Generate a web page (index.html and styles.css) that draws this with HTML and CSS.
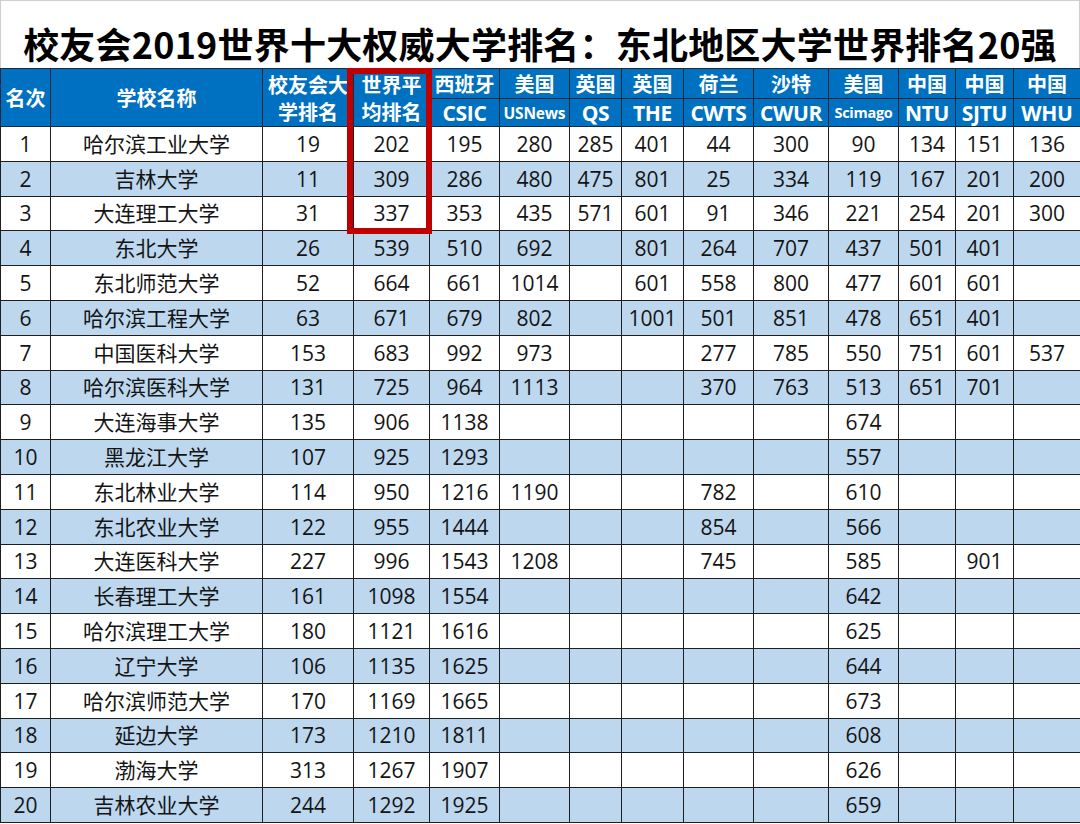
FILE: index.html
```html
<!DOCTYPE html>
<html lang="zh-CN">
<head>
<meta charset="utf-8">
<title>校友会2019世界十大权威大学排名：东北地区大学世界排名20强</title>
<link rel="stylesheet" href="styles.css">
</head>
<body>
<div class="sheet">
  <div class="title">校友会2019世界十大权威大学排名：东北地区大学世界排名20强</div>
  <div class="table-wrap">
    <table class="rank">
      <colgroup>
        <col class="c-no"><col class="c-name"><col class="c-xyh"><col class="c-avg">
        <col class="c-csic"><col class="c-us"><col class="c-qs"><col class="c-the">
        <col class="c-cwts"><col class="c-cwur"><col class="c-sci"><col class="c-ntu">
        <col class="c-sjtu"><col class="c-whu">
      </colgroup>
      <thead>
        <tr class="h1">
          <th rowspan="2">名次</th>
          <th rowspan="2">学校名称</th>
          <th rowspan="2" class="two">校友会大<br>学排名</th>
          <th rowspan="2" class="two">世界平<br>均排名</th>
          <th>西班牙</th><th>美国</th><th>英国</th><th>英国</th><th>荷兰</th>
          <th>沙特</th><th>美国</th><th>中国</th><th>中国</th><th>中国</th>
        </tr>
        <tr class="h2">
          <th>CSIC</th><th class="sm">USNews</th><th>QS</th><th>THE</th><th>CWTS</th>
          <th>CWUR</th><th class="xs">Scimago</th><th>NTU</th><th>SJTU</th><th>WHU</th>
        </tr>
      </thead>
      <tbody>
        <tr><td>1</td><td>哈尔滨工业大学</td><td>19</td><td class="g">202</td><td class="g">195</td><td class="g">280</td><td>285</td><td>401</td><td>44</td><td>300</td><td class="g">90</td><td>134</td><td>151</td><td>136</td></tr>
        <tr><td>2</td><td>吉林大学</td><td>11</td><td class="g">309</td><td class="g">286</td><td class="g">480</td><td>475</td><td>801</td><td>25</td><td>334</td><td class="g">119</td><td>167</td><td>201</td><td>200</td></tr>
        <tr><td>3</td><td>大连理工大学</td><td>31</td><td class="g">337</td><td class="g">353</td><td class="g">435</td><td>571</td><td>601</td><td>91</td><td>346</td><td class="g">221</td><td>254</td><td>201</td><td>300</td></tr>
        <tr><td>4</td><td>东北大学</td><td>26</td><td class="g">539</td><td class="g">510</td><td class="g">692</td><td></td><td>801</td><td>264</td><td>707</td><td class="g">437</td><td>501</td><td>401</td><td></td></tr>
        <tr><td>5</td><td>东北师范大学</td><td>52</td><td class="g">664</td><td class="g">661</td><td class="g">1014</td><td></td><td>601</td><td>558</td><td>800</td><td class="g">477</td><td>601</td><td>601</td><td></td></tr>
        <tr><td>6</td><td>哈尔滨工程大学</td><td>63</td><td class="g">671</td><td class="g">679</td><td class="g">802</td><td></td><td>1001</td><td>501</td><td>851</td><td class="g">478</td><td>651</td><td>401</td><td></td></tr>
        <tr><td>7</td><td>中国医科大学</td><td>153</td><td class="g">683</td><td class="g">992</td><td class="g">973</td><td></td><td></td><td>277</td><td>785</td><td class="g">550</td><td>751</td><td>601</td><td>537</td></tr>
        <tr><td>8</td><td>哈尔滨医科大学</td><td>131</td><td class="g">725</td><td class="g">964</td><td class="g">1113</td><td></td><td></td><td>370</td><td>763</td><td class="g">513</td><td>651</td><td>701</td><td></td></tr>
        <tr><td>9</td><td>大连海事大学</td><td>135</td><td class="g">906</td><td class="g">1138</td><td class="g"></td><td></td><td></td><td></td><td></td><td class="g">674</td><td></td><td></td><td></td></tr>
        <tr><td>10</td><td>黑龙江大学</td><td>107</td><td class="g">925</td><td class="g">1293</td><td class="g"></td><td></td><td></td><td></td><td></td><td class="g">557</td><td></td><td></td><td></td></tr>
        <tr><td>11</td><td>东北林业大学</td><td>114</td><td class="g">950</td><td class="g">1216</td><td class="g">1190</td><td></td><td></td><td>782</td><td></td><td class="g">610</td><td></td><td></td><td></td></tr>
        <tr><td>12</td><td>东北农业大学</td><td>122</td><td class="g">955</td><td class="g">1444</td><td class="g"></td><td></td><td></td><td>854</td><td></td><td class="g">566</td><td></td><td></td><td></td></tr>
        <tr><td>13</td><td>大连医科大学</td><td>227</td><td class="g">996</td><td class="g">1543</td><td class="g">1208</td><td></td><td></td><td>745</td><td></td><td class="g">585</td><td></td><td>901</td><td></td></tr>
        <tr><td>14</td><td>长春理工大学</td><td>161</td><td class="g">1098</td><td class="g">1554</td><td class="g"></td><td></td><td></td><td></td><td></td><td class="g">642</td><td></td><td></td><td></td></tr>
        <tr><td>15</td><td>哈尔滨理工大学</td><td>180</td><td class="g">1121</td><td class="g">1616</td><td class="g"></td><td></td><td></td><td></td><td></td><td class="g">625</td><td></td><td></td><td></td></tr>
        <tr><td>16</td><td>辽宁大学</td><td>106</td><td class="g">1135</td><td class="g">1625</td><td class="g"></td><td></td><td></td><td></td><td></td><td class="g">644</td><td></td><td></td><td></td></tr>
        <tr><td>17</td><td>哈尔滨师范大学</td><td>170</td><td class="g">1169</td><td class="g">1665</td><td class="g"></td><td></td><td></td><td></td><td></td><td class="g">673</td><td></td><td></td><td></td></tr>
        <tr><td>18</td><td>延边大学</td><td>173</td><td class="g">1210</td><td class="g">1811</td><td class="g"></td><td></td><td></td><td></td><td></td><td class="g">608</td><td></td><td></td><td></td></tr>
        <tr><td>19</td><td>渤海大学</td><td>313</td><td class="g">1267</td><td class="g">1907</td><td class="g"></td><td></td><td></td><td></td><td></td><td class="g">626</td><td></td><td></td><td></td></tr>
        <tr><td>20</td><td>吉林农业大学</td><td>244</td><td class="g">1292</td><td class="g">1925</td><td class="g"></td><td></td><td></td><td></td><td></td><td class="g">659</td><td></td><td></td><td></td></tr>
      </tbody>
    </table>
    <div class="highlight"></div>
  </div>
</div>
</body>
</html>
```
FILE: styles.css
```css
html, body {
  margin: 0;
  padding: 0;
  background: #ffffff;
}

.sheet {
  width: 1080px;
  height: 824px;
  overflow: hidden;
  font-family: "Open Sans", "Noto Sans CJK SC", sans-serif;
  color: #141414;
}

.title {
  box-sizing: border-box;
  height: 68px;
  border: 1px solid #cfcfcf;
  border-bottom: none;
  padding-top: 19px;
  text-align: center;
  font-family: "Noto Sans CJK SC", sans-serif;
  font-weight: 700;
  font-size: 36px;
  line-height: 46px;
  color: #000000;
  letter-spacing: 0.2px;
  white-space: nowrap;
}

.table-wrap {
  position: relative;
}

.rank {
  width: 1080px;
  border-collapse: collapse;
  table-layout: fixed;
}

.c-no { width: 50px; }
.c-name { width: 212px; }
.c-xyh { width: 91px; }
.c-avg { width: 76px; }
.c-csic { width: 70px; }
.c-us { width: 70px; }
.c-qs { width: 52px; }
.c-the { width: 62px; }
.c-cwts { width: 70px; }
.c-cwur { width: 75px; }
.c-sci { width: 70px; }
.c-ntu { width: 57px; }
.c-sjtu { width: 58px; }
.c-whu { width: 67px; }

.rank th {
  background: #0070c0;
  color: #ffffff;
  font-family: "Noto Sans CJK SC", sans-serif;
  font-weight: 700;
  font-size: 20px;
  line-height: 24px;
  border: 1px solid #1b2a3a;
  padding: 0;
  text-align: center;
  vertical-align: middle;
  white-space: nowrap;
}

.rank .h1 { height: 30px; }
.rank .h2 { height: 28px; }

.rank .h2 th {
  font-family: "Open Sans", sans-serif;
  font-size: 21px;
  letter-spacing: -0.3px;
}

.rank .h2 th.sm { font-size: 15.5px; letter-spacing: -0.2px; }
.rank .h2 th.xs { font-size: 14.5px; letter-spacing: -0.3px; }

.rank th.two {
  line-height: 27px;
}

.rank td {
  height: 33.8px;
  padding: 0;
  border: 1px solid #1e1e1e;
  text-align: center;
  vertical-align: middle;
  font-size: 21px;
  line-height: 26px;
  white-space: nowrap;
}

.rank td.g {
  border-left-color: #8a8a8a;
}

.rank tbody tr:nth-child(even) td {
  background: #bdd7ee;
}

.highlight {
  position: absolute;
  left: 347px;
  top: 0;
  width: 85px;
  height: 166px;
  box-sizing: border-box;
  border: 6px solid #c00000;
  pointer-events: none;
}
```
